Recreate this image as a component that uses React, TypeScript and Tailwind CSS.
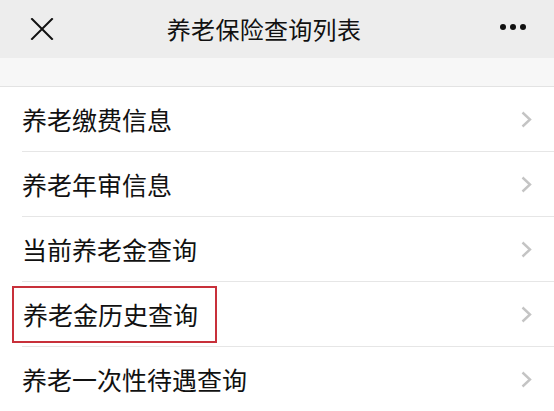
import React from 'react';

const items = ['养老缴费信息', '养老年审信息', '当前养老金查询', '养老金历史查询', '养老一次性待遇查询'];
const HIGHLIGHT = 3;

const CloseIcon = () => (
    <svg width="24" height="22" viewBox="0 0 24 22" fill="none" stroke="#111" strokeWidth="2" strokeLinecap="square">
        <path d="M2 1 L22 21 M22 1 L2 21" />
    </svg>
);

const Chevron = () => (
    <svg width="11" height="17" viewBox="0 0 11 17" fill="none" stroke="#c4c4c4" strokeWidth="2.4">
        <path d="M1.5 1.5 L9 8.5 L1.5 15.5" />
    </svg>
);

const App: React.FC = () => {
    return (
        <div
            className="w-[554px] h-[411px] overflow-hidden bg-white text-[#111]"
            style={{ fontFamily: '"Noto Sans CJK SC", "Noto Sans", sans-serif' }}
        >
            <header className="h-[58px] bg-[#ededed] flex items-center justify-between pl-[30px] pr-[28px]">
                <CloseIcon />
                <h1 className="text-[24px] leading-none mr-[26px] tracking-[0.3px]">养老保险查询列表</h1>
                <div className="flex gap-[4px] pb-[4px]">
                    <span className="w-[6px] h-[6px] rounded-full bg-[#111]" />
                    <span className="w-[6px] h-[6px] rounded-full bg-[#111]" />
                    <span className="w-[6px] h-[6px] rounded-full bg-[#111]" />
                </div>
            </header>
            <div className="h-[29px] bg-[#f7f7f7] border-b border-[#e3e3e3]" />
            <ul className="pl-[22px]">
                {items.map((label, idx) => (
                    <li key={label} className="h-[65px] flex items-center justify-between pr-[22px] border-b border-[#e6e6e6]">
                        {idx === HIGHLIGHT ? (
                            <span className="-ml-[10px] pl-[9px] w-[205px] h-[57px] flex items-center border-2 border-[#c8303a] text-[25px] leading-none">
                                {label}
                            </span>
                        ) : (
                            <span className="text-[25px] leading-none">{label}</span>
                        )}
                        <Chevron />
                    </li>
                ))}
            </ul>
        </div>
    );
};

export default App;
